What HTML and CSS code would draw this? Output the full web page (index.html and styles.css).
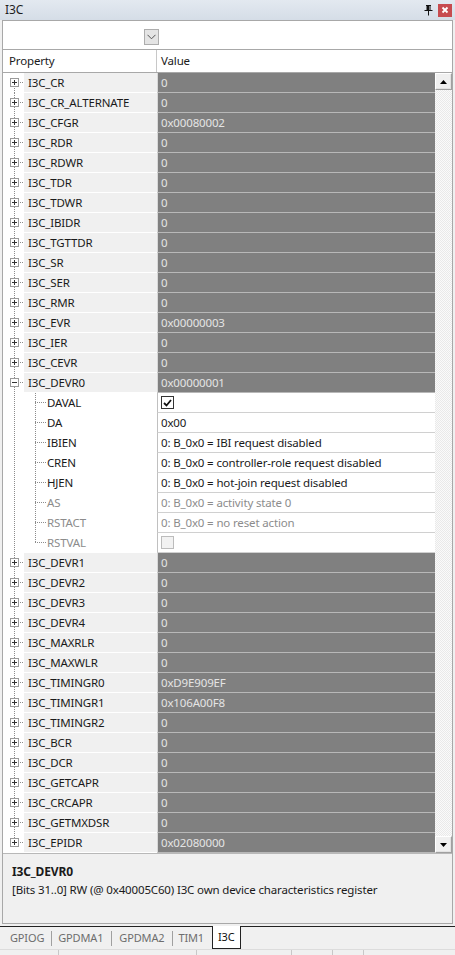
FILE: index.html
```html
<!DOCTYPE html>
<html>
<head>
<meta charset="utf-8">
<link rel="stylesheet" href="styles.css">
</head>
<body>
<div class="titlebar">
  <span class="title">I3C</span>
  <span class="tbtns">
    <svg class="pin" width="9" height="11" viewBox="0 0 9 11"><path d="M2 0.5h5M3 0.5v5M6 0.5v5M0.5 5.5h8M4.5 5.5v5" stroke="#111" stroke-width="1" fill="none"/><rect x="3" y="1" width="2" height="4.5" fill="#111"/></svg>
    <span class="close"><svg width="8" height="8" viewBox="0 0 8 8"><path d="M1.5 1.5l5 5M6.5 1.5l-5 5" stroke="#fff" stroke-width="1.8"/></svg></span>
  </span>
</div>
<div class="panel">
  <div class="toolbar">
    <span class="dd"><svg width="9" height="6" viewBox="0 0 9 6"><path d="M0.5 0.8l4 4 4-4" stroke="#555" stroke-width="1" fill="none"/></svg></span>
  </div>
  <div class="gridhead">
    <div class="hprop">Property</div>
    <div class="hval">Value</div>
  </div>
  <div class="body">
    <div class="rows">
      <div class="row top first"><div class="prop"><span class="gut"><svg class="exp" width="9" height="9" viewBox="0 0 9 9"><rect x="0.5" y="0.5" width="8" height="8" fill="#fff" stroke="#9a9a9a"/><path d="M2 4.5h5M4.5 2v5" stroke="#333"/></svg></span><span class="lbl">I3C_CR</span></div><div class="val">0</div></div>
      <div class="row top"><div class="prop"><span class="gut"><svg class="exp" width="9" height="9" viewBox="0 0 9 9"><rect x="0.5" y="0.5" width="8" height="8" fill="#fff" stroke="#9a9a9a"/><path d="M2 4.5h5M4.5 2v5" stroke="#333"/></svg></span><span class="lbl">I3C_CR_ALTERNATE</span></div><div class="val">0</div></div>
      <div class="row top"><div class="prop"><span class="gut"><svg class="exp" width="9" height="9" viewBox="0 0 9 9"><rect x="0.5" y="0.5" width="8" height="8" fill="#fff" stroke="#9a9a9a"/><path d="M2 4.5h5M4.5 2v5" stroke="#333"/></svg></span><span class="lbl">I3C_CFGR</span></div><div class="val">0x00080002</div></div>
      <div class="row top"><div class="prop"><span class="gut"><svg class="exp" width="9" height="9" viewBox="0 0 9 9"><rect x="0.5" y="0.5" width="8" height="8" fill="#fff" stroke="#9a9a9a"/><path d="M2 4.5h5M4.5 2v5" stroke="#333"/></svg></span><span class="lbl">I3C_RDR</span></div><div class="val">0</div></div>
      <div class="row top"><div class="prop"><span class="gut"><svg class="exp" width="9" height="9" viewBox="0 0 9 9"><rect x="0.5" y="0.5" width="8" height="8" fill="#fff" stroke="#9a9a9a"/><path d="M2 4.5h5M4.5 2v5" stroke="#333"/></svg></span><span class="lbl">I3C_RDWR</span></div><div class="val">0</div></div>
      <div class="row top"><div class="prop"><span class="gut"><svg class="exp" width="9" height="9" viewBox="0 0 9 9"><rect x="0.5" y="0.5" width="8" height="8" fill="#fff" stroke="#9a9a9a"/><path d="M2 4.5h5M4.5 2v5" stroke="#333"/></svg></span><span class="lbl">I3C_TDR</span></div><div class="val">0</div></div>
      <div class="row top"><div class="prop"><span class="gut"><svg class="exp" width="9" height="9" viewBox="0 0 9 9"><rect x="0.5" y="0.5" width="8" height="8" fill="#fff" stroke="#9a9a9a"/><path d="M2 4.5h5M4.5 2v5" stroke="#333"/></svg></span><span class="lbl">I3C_TDWR</span></div><div class="val">0</div></div>
      <div class="row top"><div class="prop"><span class="gut"><svg class="exp" width="9" height="9" viewBox="0 0 9 9"><rect x="0.5" y="0.5" width="8" height="8" fill="#fff" stroke="#9a9a9a"/><path d="M2 4.5h5M4.5 2v5" stroke="#333"/></svg></span><span class="lbl">I3C_IBIDR</span></div><div class="val">0</div></div>
      <div class="row top"><div class="prop"><span class="gut"><svg class="exp" width="9" height="9" viewBox="0 0 9 9"><rect x="0.5" y="0.5" width="8" height="8" fill="#fff" stroke="#9a9a9a"/><path d="M2 4.5h5M4.5 2v5" stroke="#333"/></svg></span><span class="lbl">I3C_TGTTDR</span></div><div class="val">0</div></div>
      <div class="row top"><div class="prop"><span class="gut"><svg class="exp" width="9" height="9" viewBox="0 0 9 9"><rect x="0.5" y="0.5" width="8" height="8" fill="#fff" stroke="#9a9a9a"/><path d="M2 4.5h5M4.5 2v5" stroke="#333"/></svg></span><span class="lbl">I3C_SR</span></div><div class="val">0</div></div>
      <div class="row top"><div class="prop"><span class="gut"><svg class="exp" width="9" height="9" viewBox="0 0 9 9"><rect x="0.5" y="0.5" width="8" height="8" fill="#fff" stroke="#9a9a9a"/><path d="M2 4.5h5M4.5 2v5" stroke="#333"/></svg></span><span class="lbl">I3C_SER</span></div><div class="val">0</div></div>
      <div class="row top"><div class="prop"><span class="gut"><svg class="exp" width="9" height="9" viewBox="0 0 9 9"><rect x="0.5" y="0.5" width="8" height="8" fill="#fff" stroke="#9a9a9a"/><path d="M2 4.5h5M4.5 2v5" stroke="#333"/></svg></span><span class="lbl">I3C_RMR</span></div><div class="val">0</div></div>
      <div class="row top"><div class="prop"><span class="gut"><svg class="exp" width="9" height="9" viewBox="0 0 9 9"><rect x="0.5" y="0.5" width="8" height="8" fill="#fff" stroke="#9a9a9a"/><path d="M2 4.5h5M4.5 2v5" stroke="#333"/></svg></span><span class="lbl">I3C_EVR</span></div><div class="val">0x00000003</div></div>
      <div class="row top"><div class="prop"><span class="gut"><svg class="exp" width="9" height="9" viewBox="0 0 9 9"><rect x="0.5" y="0.5" width="8" height="8" fill="#fff" stroke="#9a9a9a"/><path d="M2 4.5h5M4.5 2v5" stroke="#333"/></svg></span><span class="lbl">I3C_IER</span></div><div class="val">0</div></div>
      <div class="row top"><div class="prop"><span class="gut"><svg class="exp" width="9" height="9" viewBox="0 0 9 9"><rect x="0.5" y="0.5" width="8" height="8" fill="#fff" stroke="#9a9a9a"/><path d="M2 4.5h5M4.5 2v5" stroke="#333"/></svg></span><span class="lbl">I3C_CEVR</span></div><div class="val">0</div></div>
      <div class="row top"><div class="prop"><span class="gut"><svg class="exp" width="9" height="9" viewBox="0 0 9 9"><rect x="0.5" y="0.5" width="8" height="8" fill="#fff" stroke="#9a9a9a"/><path d="M2 4.5h5" stroke="#333"/></svg></span><span class="lbl">I3C_DEVR0</span></div><div class="val">0x00000001</div></div>
      <div class="row child"><div class="prop"><span class="gut"></span><span class="cgut"></span><span class="lbl">DAVAL</span></div><div class="val"><span class="chk"><svg width="9" height="8" viewBox="0 0 9 8"><path d="M1 4l2.5 2.5L8 1" stroke="#111" stroke-width="1.8" fill="none"/></svg></span></div></div>
      <div class="row child"><div class="prop"><span class="gut"></span><span class="cgut"></span><span class="lbl">DA</span></div><div class="val">0x00</div></div>
      <div class="row child"><div class="prop"><span class="gut"></span><span class="cgut"></span><span class="lbl">IBIEN</span></div><div class="val">0: B_0x0 = IBI request disabled</div></div>
      <div class="row child"><div class="prop"><span class="gut"></span><span class="cgut"></span><span class="lbl">CREN</span></div><div class="val">0: B_0x0 = controller-role request disabled</div></div>
      <div class="row child"><div class="prop"><span class="gut"></span><span class="cgut"></span><span class="lbl">HJEN</span></div><div class="val">0: B_0x0 = hot-join request disabled</div></div>
      <div class="row child dis"><div class="prop"><span class="gut"></span><span class="cgut"></span><span class="lbl">AS</span></div><div class="val">0: B_0x0 = activity state 0</div></div>
      <div class="row child dis"><div class="prop"><span class="gut"></span><span class="cgut"></span><span class="lbl">RSTACT</span></div><div class="val">0: B_0x0 = no reset action</div></div>
      <div class="row child dis lastchild"><div class="prop"><span class="gut"></span><span class="cgut"></span><span class="lbl">RSTVAL</span></div><div class="val"><span class="chk off"></span></div></div>
      <div class="row top"><div class="prop"><span class="gut"><svg class="exp" width="9" height="9" viewBox="0 0 9 9"><rect x="0.5" y="0.5" width="8" height="8" fill="#fff" stroke="#9a9a9a"/><path d="M2 4.5h5M4.5 2v5" stroke="#333"/></svg></span><span class="lbl">I3C_DEVR1</span></div><div class="val">0</div></div>
      <div class="row top"><div class="prop"><span class="gut"><svg class="exp" width="9" height="9" viewBox="0 0 9 9"><rect x="0.5" y="0.5" width="8" height="8" fill="#fff" stroke="#9a9a9a"/><path d="M2 4.5h5M4.5 2v5" stroke="#333"/></svg></span><span class="lbl">I3C_DEVR2</span></div><div class="val">0</div></div>
      <div class="row top"><div class="prop"><span class="gut"><svg class="exp" width="9" height="9" viewBox="0 0 9 9"><rect x="0.5" y="0.5" width="8" height="8" fill="#fff" stroke="#9a9a9a"/><path d="M2 4.5h5M4.5 2v5" stroke="#333"/></svg></span><span class="lbl">I3C_DEVR3</span></div><div class="val">0</div></div>
      <div class="row top"><div class="prop"><span class="gut"><svg class="exp" width="9" height="9" viewBox="0 0 9 9"><rect x="0.5" y="0.5" width="8" height="8" fill="#fff" stroke="#9a9a9a"/><path d="M2 4.5h5M4.5 2v5" stroke="#333"/></svg></span><span class="lbl">I3C_DEVR4</span></div><div class="val">0</div></div>
      <div class="row top"><div class="prop"><span class="gut"><svg class="exp" width="9" height="9" viewBox="0 0 9 9"><rect x="0.5" y="0.5" width="8" height="8" fill="#fff" stroke="#9a9a9a"/><path d="M2 4.5h5M4.5 2v5" stroke="#333"/></svg></span><span class="lbl">I3C_MAXRLR</span></div><div class="val">0</div></div>
      <div class="row top"><div class="prop"><span class="gut"><svg class="exp" width="9" height="9" viewBox="0 0 9 9"><rect x="0.5" y="0.5" width="8" height="8" fill="#fff" stroke="#9a9a9a"/><path d="M2 4.5h5M4.5 2v5" stroke="#333"/></svg></span><span class="lbl">I3C_MAXWLR</span></div><div class="val">0</div></div>
      <div class="row top"><div class="prop"><span class="gut"><svg class="exp" width="9" height="9" viewBox="0 0 9 9"><rect x="0.5" y="0.5" width="8" height="8" fill="#fff" stroke="#9a9a9a"/><path d="M2 4.5h5M4.5 2v5" stroke="#333"/></svg></span><span class="lbl">I3C_TIMINGR0</span></div><div class="val">0xD9E909EF</div></div>
      <div class="row top"><div class="prop"><span class="gut"><svg class="exp" width="9" height="9" viewBox="0 0 9 9"><rect x="0.5" y="0.5" width="8" height="8" fill="#fff" stroke="#9a9a9a"/><path d="M2 4.5h5M4.5 2v5" stroke="#333"/></svg></span><span class="lbl">I3C_TIMINGR1</span></div><div class="val">0x106A00F8</div></div>
      <div class="row top"><div class="prop"><span class="gut"><svg class="exp" width="9" height="9" viewBox="0 0 9 9"><rect x="0.5" y="0.5" width="8" height="8" fill="#fff" stroke="#9a9a9a"/><path d="M2 4.5h5M4.5 2v5" stroke="#333"/></svg></span><span class="lbl">I3C_TIMINGR2</span></div><div class="val">0</div></div>
      <div class="row top"><div class="prop"><span class="gut"><svg class="exp" width="9" height="9" viewBox="0 0 9 9"><rect x="0.5" y="0.5" width="8" height="8" fill="#fff" stroke="#9a9a9a"/><path d="M2 4.5h5M4.5 2v5" stroke="#333"/></svg></span><span class="lbl">I3C_BCR</span></div><div class="val">0</div></div>
      <div class="row top"><div class="prop"><span class="gut"><svg class="exp" width="9" height="9" viewBox="0 0 9 9"><rect x="0.5" y="0.5" width="8" height="8" fill="#fff" stroke="#9a9a9a"/><path d="M2 4.5h5M4.5 2v5" stroke="#333"/></svg></span><span class="lbl">I3C_DCR</span></div><div class="val">0</div></div>
      <div class="row top"><div class="prop"><span class="gut"><svg class="exp" width="9" height="9" viewBox="0 0 9 9"><rect x="0.5" y="0.5" width="8" height="8" fill="#fff" stroke="#9a9a9a"/><path d="M2 4.5h5M4.5 2v5" stroke="#333"/></svg></span><span class="lbl">I3C_GETCAPR</span></div><div class="val">0</div></div>
      <div class="row top"><div class="prop"><span class="gut"><svg class="exp" width="9" height="9" viewBox="0 0 9 9"><rect x="0.5" y="0.5" width="8" height="8" fill="#fff" stroke="#9a9a9a"/><path d="M2 4.5h5M4.5 2v5" stroke="#333"/></svg></span><span class="lbl">I3C_CRCAPR</span></div><div class="val">0</div></div>
      <div class="row top"><div class="prop"><span class="gut"><svg class="exp" width="9" height="9" viewBox="0 0 9 9"><rect x="0.5" y="0.5" width="8" height="8" fill="#fff" stroke="#9a9a9a"/><path d="M2 4.5h5M4.5 2v5" stroke="#333"/></svg></span><span class="lbl">I3C_GETMXDSR</span></div><div class="val">0</div></div>
      <div class="row top last"><div class="prop"><span class="gut"><svg class="exp" width="9" height="9" viewBox="0 0 9 9"><rect x="0.5" y="0.5" width="8" height="8" fill="#fff" stroke="#9a9a9a"/><path d="M2 4.5h5M4.5 2v5" stroke="#333"/></svg></span><span class="lbl">I3C_EPIDR</span></div><div class="val">0x02080000</div></div>
    </div>
    <div class="vscroll">
      <span class="sbtn"><svg width="7" height="4" viewBox="0 0 7 4"><path d="M0 4h7L3.5 0z" fill="#000"/></svg></span>
      <span class="track"></span>
      <span class="sbtn"><svg width="7" height="4" viewBox="0 0 7 4"><path d="M0 0h7L3.5 4z" fill="#000"/></svg></span>
    </div>
  </div>
  <div class="desc">
    <div class="dname">I3C_DEVR0</div>
    <div class="dtext">[Bits 31..0] RW (@ 0x40005C60) I3C own device characteristics register</div>
  </div>
</div>
<div class="tabs">
  <span class="tab">GPIOG</span><span class="sep s1"></span>
  <span class="tab">GPDMA1</span><span class="sep s2"></span>
  <span class="tab">GPDMA2</span><span class="sep s3"></span>
  <span class="tab">TIM1</span>
  <span class="tab sel">I3C</span>
</div>
<div class="status">
  <span class="scell w1"></span><span class="scell w2"></span><span class="scell w3"></span><span class="scell w4"></span><span class="scell w5"></span>
</div>
</body>
</html>
```
FILE: styles.css
```css
html, body {
  margin: 0;
  padding: 0;
}
body {
  width: 455px;
  height: 955px;
  overflow: hidden;
  background: #f0f0f0;
  font-family: "Noto Sans", "Open Sans", sans-serif;
  font-size: 11.5px;
  letter-spacing: -0.15px;
  color: #1a1a1a;
}
.titlebar {
  height: 20px;
  display: flex;
  align-items: center;
  justify-content: space-between;
  background: linear-gradient(#e3e9f0, #d5dde7);
  padding: 0 3px 0 5px;
}
.title {
  font-size: 12px;
  color: #1e1e1e;
  line-height: 20px;
}
.tbtns {
  display: flex;
  align-items: center;
  gap: 5px;
}
.pin {
  display: block;
}
.close {
  width: 14px;
  height: 13px;
  background: #c74b4f;
  display: flex;
  align-items: center;
  justify-content: center;
}
.close svg { display: block; }

.panel {
  margin: 0 2px;
  border: 1px solid #a8a8a8;
  background: #fff;
}
.toolbar {
  border-bottom: 1px solid #a8a8a8;
  box-sizing: border-box;
  padding: 8px 0 0 141px;
  height: 29px;
  background: #fff;
}
.dd {
  width: 13px;
  height: 14px;
  display: flex;
  align-items: center;
  justify-content: center;
  background: #e4e4e4;
  border: 1px solid #adadad;
}
.gridhead {
  display: grid;
  grid-template-columns: 154px 1fr;
  height: 23px;
  box-sizing: border-box;
  border-bottom: 1px solid #a8a8a8;
  line-height: 22px;
  background: #fff;
}
.hprop {
  padding-left: 6px;
  border-right: 1px solid #c8c8c8;
}
.hval {
  padding-left: 4px;
}
.body {
  display: flex;
  height: 780px;
}
.rows {
  width: 432px;
}
.row {
  display: grid;
  grid-template-columns: 154px 1fr;
  height: 20px;
}
.prop {
  display: flex;
  height: 20px;
}
.gut {
  width: 21px;
  flex: none;
  height: 20px;
  box-sizing: border-box;
  padding: 5px 0 0 7px;
  background-image:
    repeating-linear-gradient(to bottom, #8c8c8c 0 1px, transparent 1px 2px),
    repeating-linear-gradient(to right, #8c8c8c 0 1px, transparent 1px 2px);
  background-size: 1px 20px, 10px 1px;
  background-position: 11px 0, 11px 9px;
  background-repeat: no-repeat;
}
.row.first .gut {
  background-size: 1px 11px, 10px 1px;
  background-position: 11px 9px, 11px 9px;
}
.row.last .gut {
  background-size: 1px 10px, 10px 1px;
  background-position: 11px 0, 11px 9px;
}
.row.child .gut {
  background-image: repeating-linear-gradient(to bottom, #8c8c8c 0 1px, transparent 1px 2px);
  background-size: 1px 20px;
  background-position: 11px 0;
}
.exp {
  display: block;
}
.cgut {
  width: 22px;
  flex: none;
  height: 20px;
  background-image:
    repeating-linear-gradient(to bottom, #8c8c8c 0 1px, transparent 1px 2px),
    repeating-linear-gradient(to right, #8c8c8c 0 1px, transparent 1px 2px);
  background-size: 1px 20px, 11px 1px;
  background-position: 11px 0, 11px 9px;
  background-repeat: no-repeat;
}
.row.lastchild .cgut {
  background-size: 1px 10px, 11px 1px;
}
.lbl {
  flex: 1;
  height: 19px;
  line-height: 19px;
  padding-left: 4px;
  border-bottom: 1px solid #fff;
  background: #f0f0f0;
  white-space: nowrap;
  overflow: hidden;
}
.row.child .lbl {
  background: #fff;
  padding-left: 1px;
}
.val {
  height: 19px;
  line-height: 19px;
  padding-left: 3px;
  background: #808080;
  color: #e4e4e4;
  border-left: 1px solid #d8d8d8;
  border-bottom: 1px solid #b8b8b8;
  white-space: nowrap;
  overflow: hidden;
}
.row.child .val {
  background: #fff;
  color: #1a1a1a;
  border-left-color: #c0c0c0;
  border-bottom-color: #d0d0d0;
}
.row.dis .lbl,
.row.dis .val {
  color: #8c8c8c;
}
.chk {
  display: flex;
  align-items: center;
  justify-content: center;
  width: 11px;
  height: 11px;
  margin-top: 3px;
  border: 1px solid #333;
  background: #fff;
}
.chk.off {
  border-color: #bcbcbc;
  background: #f2f2f2;
}
.vscroll {
  width: 17px;
  display: flex;
  flex-direction: column;
}
.sbtn {
  height: 17px;
  flex: none;
  box-sizing: border-box;
  display: flex;
  align-items: center;
  justify-content: center;
  background: #f0f0f0;
  border: 1px solid #fff;
  border-right-color: #a0a0a0;
  border-bottom-color: #a0a0a0;
  box-shadow: inset -1px -1px 0 #e3e3e3;
}
.sbtn svg { display: block; }
.track {
  flex: 1;
  background: repeating-conic-gradient(#e9e9e9 0 25%, #fafafa 0 50%) 0 0 / 2px 2px;
}
.desc {
  height: 70px;
  box-sizing: border-box;
  border-top: 1px solid #b8b8b8;
  background: #f0f0f0;
  padding: 9px 0 0 9px;
  line-height: 18px;
}
.dname {
  font-weight: bold;
  font-size: 12px;
}
.dtext {
  font-size: 11.5px;
}
.tabs {
  margin-top: 2px;
  height: 22px;
  border-top: 1px solid #222;
  display: flex;
  align-items: center;
  padding-left: 10px;
  color: #6d6d6d;
  font-size: 11px;
}
.tab {
  line-height: 22px;
}
.sep {
  width: 1px;
  height: 15px;
  background: #a0a0a0;
}
.s1 { margin: 0 6px 0 7px; }
.s2 { margin: 0 7px 0 8px; }
.s3 { margin: 0 5px 0 8px; }
.tab.sel {
  margin-left: 8px;
  margin-top: -1px;
  align-self: flex-start;
  height: 23px;
  box-sizing: border-box;
  padding: 0 6px 0 5px;
  background: #fff;
  color: #111;
  border: 1px solid #222;
  border-top: none;
}
.status {
  height: 8px;
  display: flex;
  border-top: 1px solid #dcdcdc;
}
.scell {
  height: 8px;
  border-right: 1px solid #c8c8c8;
}
.w1 { width: 58px; }
.w2 { width: 137px; }
.w3 { width: 94px; }
.w4 { width: 40px; }
.w5 { width: 30px; }
```
